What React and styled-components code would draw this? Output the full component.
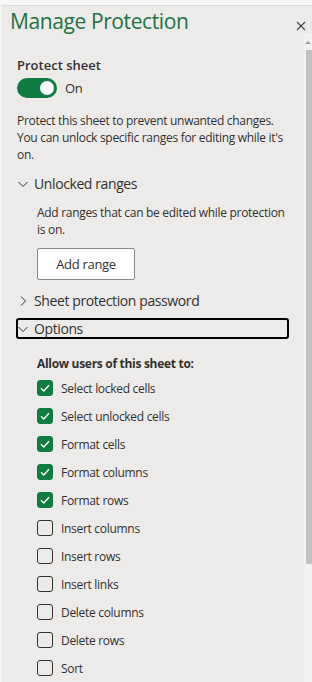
import React from "react";
import styled, { createGlobalStyle } from "styled-components";

const GlobalStyle = createGlobalStyle`
  html, body {
    margin: 0;
    padding: 0;
    background: #f7f7f7;
    overflow: hidden;
  }
  * {
    box-sizing: border-box;
  }
`;

const Frame = styled.div`
  width: 312px;
  height: 682px;
  padding-top: 5px;
  background: #f7f7f7;
  font-family: "Open Sans", "Noto Sans", sans-serif;
  color: #323130;
  letter-spacing: -0.3px;
`;

const Pane = styled.div`
  height: 677px;
  display: flex;
  flex-direction: column;
  background: #edebe9;
  border-top: 1px solid #dcdcdc;
  border-left: 2px solid #f4f4f4;
`;

const Header = styled.div`
  height: 27px;
  display: flex;
  align-items: flex-start;
  justify-content: space-between;
  padding-left: 8px;
`;

const Title = styled.h1`
  margin: 0;
  padding-top: 1px;
  font-size: 21px;
  font-weight: 400;
  line-height: 28px;
  letter-spacing: -0.4px;
  color: #217346;
`;

const CloseButton = styled.button`
  width: 20px;
  height: 20px;
  margin: 10px 1px 0 0;
  padding: 0;
  border: none;
  background: transparent;
  display: flex;
  align-items: center;
  justify-content: center;
  color: #444;
`;

const Body = styled.div`
  flex: 1;
  display: flex;
  min-height: 0;
`;

const Content = styled.div`
  flex: 1;
  padding: 22px 15px 0 15px;
  display: flex;
  flex-direction: column;
`;

const Scrollbar = styled.div`
  width: 8px;
  background: #f1f1f1;
  display: flex;
  flex-direction: column;
  align-items: flex-end;
`;

const ScrollArrow = styled.div`
  width: 8px;
  height: 17px;
  display: flex;
  justify-content: center;
  padding-top: 7px;
`;

const ScrollThumb = styled.div`
  width: 6px;
  height: 514px;
  background: #c1c1c1;
`;

const Label = styled.div`
  font-size: 13px;
  font-weight: 600;
  line-height: 20px;
  letter-spacing: 0;
`;

const ToggleRow = styled.div`
  display: flex;
  align-items: center;
  gap: 8px;
  margin-top: 3px;
  font-size: 13px;
`;

const Toggle = styled.div`
  width: 40px;
  height: 20px;
  border-radius: 10px;
  background: ${(p) => (p.on ? "#107c41" : "#fff")};
  display: flex;
  align-items: center;
  justify-content: ${(p) => (p.on ? "flex-end" : "flex-start")};
  padding: 0 3px;
`;

const Knob = styled.div`
  width: 14px;
  height: 14px;
  border-radius: 50%;
  background: #fff;
`;

const Text = styled.p`
  margin: ${(p) => p.mt || 0}px 0 0 ${(p) => (p.indent ? 20 : 0)}px;
  font-size: 12px;
  line-height: 17px;
`;

const SectionHeader = styled.div`
  display: flex;
  align-items: center;
  gap: 6px;
  height: 21px;
  margin: ${(p) => p.mt}px 0 0 -1px;
  font-size: 14px;
  letter-spacing: -0.4px;
  border: 2px solid ${(p) => (p.focused ? "#000" : "transparent")};
  border-radius: 3px;
`;

const ChevronSlot = styled.span`
  width: 10px;
  display: flex;
  justify-content: center;
`;

const Button = styled.button`
  align-self: flex-start;
  margin: 10px 0 0 20px;
  width: 98px;
  height: 32px;
  background: #fff;
  border: 1px solid #8a8886;
  border-radius: 2px;
  font-family: inherit;
  font-size: 13px;
  font-weight: 400;
  letter-spacing: -0.3px;
  color: #323130;
`;

const GroupTitle = styled.div`
  margin: 15px 0 0 20px;
  font-size: 12px;
  font-weight: 700;
  line-height: 20px;
`;

const CheckList = styled.div`
  margin: 0 0 0 20px;
  display: flex;
  flex-direction: column;
`;

const CheckRow = styled.label`
  display: flex;
  align-items: center;
  gap: 8px;
  height: 28px;
  font-size: 12px;
`;

const Box = styled.span`
  width: 16px;
  height: 16px;
  border-radius: 3px;
  display: flex;
  align-items: center;
  justify-content: center;
  background: ${(p) => (p.checked ? "#107c41" : "transparent")};
  border: 1px solid ${(p) => (p.checked ? "#107c41" : "#323130")};
`;

const Chevron = ({ dir }) => (
  <svg width="10" height="10" viewBox="0 0 10 10">
    <path
      d={dir === "down" ? "M0.5 3 L5 7.5 L9.5 3" : "M3 0.5 L7.5 5 L3 9.5"}
      fill="none"
      stroke="#323130"
      strokeWidth="1"
    />
  </svg>
);

const options = [
  ["Select locked cells", true],
  ["Select unlocked cells", true],
  ["Format cells", true],
  ["Format columns", true],
  ["Format rows", true],
  ["Insert columns", false],
  ["Insert rows", false],
  ["Insert links", false],
  ["Delete columns", false],
  ["Delete rows", false],
  ["Sort", false],
];

export default function App() {
  return (
    <>
      <GlobalStyle />
      <Frame>
        <Pane>
          <Header>
            <Title>Manage Protection</Title>
            <CloseButton aria-label="Close">
              <svg width="10" height="10" viewBox="0 0 10 10">
                <path d="M1 1 L9 9 M9 1 L1 9" stroke="#444" strokeWidth="1.1" />
              </svg>
            </CloseButton>
          </Header>
          <Body>
            <Content>
              <Label>Protect sheet</Label>
              <ToggleRow>
                <Toggle on>
                  <Knob />
                </Toggle>
                On
              </ToggleRow>
              <Text mt={14}>
                Protect this sheet to prevent unwanted changes. You can unlock
                specific ranges for editing while it's on.
              </Text>
              <SectionHeader mt={10}>
                <ChevronSlot>
                  <Chevron dir="down" />
                </ChevronSlot>
                Unlocked ranges
              </SectionHeader>
              <Text mt={10} indent>
                Add ranges that can be edited while protection is on.
              </Text>
              <Button>Add range</Button>
              <SectionHeader mt={10}>
                <ChevronSlot>
                  <Chevron dir="right" />
                </ChevronSlot>
                Sheet protection password
              </SectionHeader>
              <SectionHeader mt={7} focused>
                <ChevronSlot>
                  <Chevron dir="down" />
                </ChevronSlot>
                Options
              </SectionHeader>
              <GroupTitle>Allow users of this sheet to:</GroupTitle>
              <CheckList>
                {options.map(([name, checked]) => (
                  <CheckRow key={name}>
                    <Box checked={checked}>
                      {checked && (
                        <svg width="12" height="12" viewBox="0 0 12 12">
                          <path
                            d="M2 6.3 L4.8 9 L10 3.3"
                            fill="none"
                            stroke="#fff"
                            strokeWidth="1.3"
                          />
                        </svg>
                      )}
                    </Box>
                    {name}
                  </CheckRow>
                ))}
              </CheckList>
            </Content>
            <Scrollbar>
              <ScrollArrow>
                <svg width="6" height="4" viewBox="0 0 6 4">
                  <path d="M0 4 L3 1 L6 4 Z" fill="#a0a0a0" />
                </svg>
              </ScrollArrow>
              <ScrollThumb />
            </Scrollbar>
          </Body>
        </Pane>
      </Frame>
    </>
  );
}
